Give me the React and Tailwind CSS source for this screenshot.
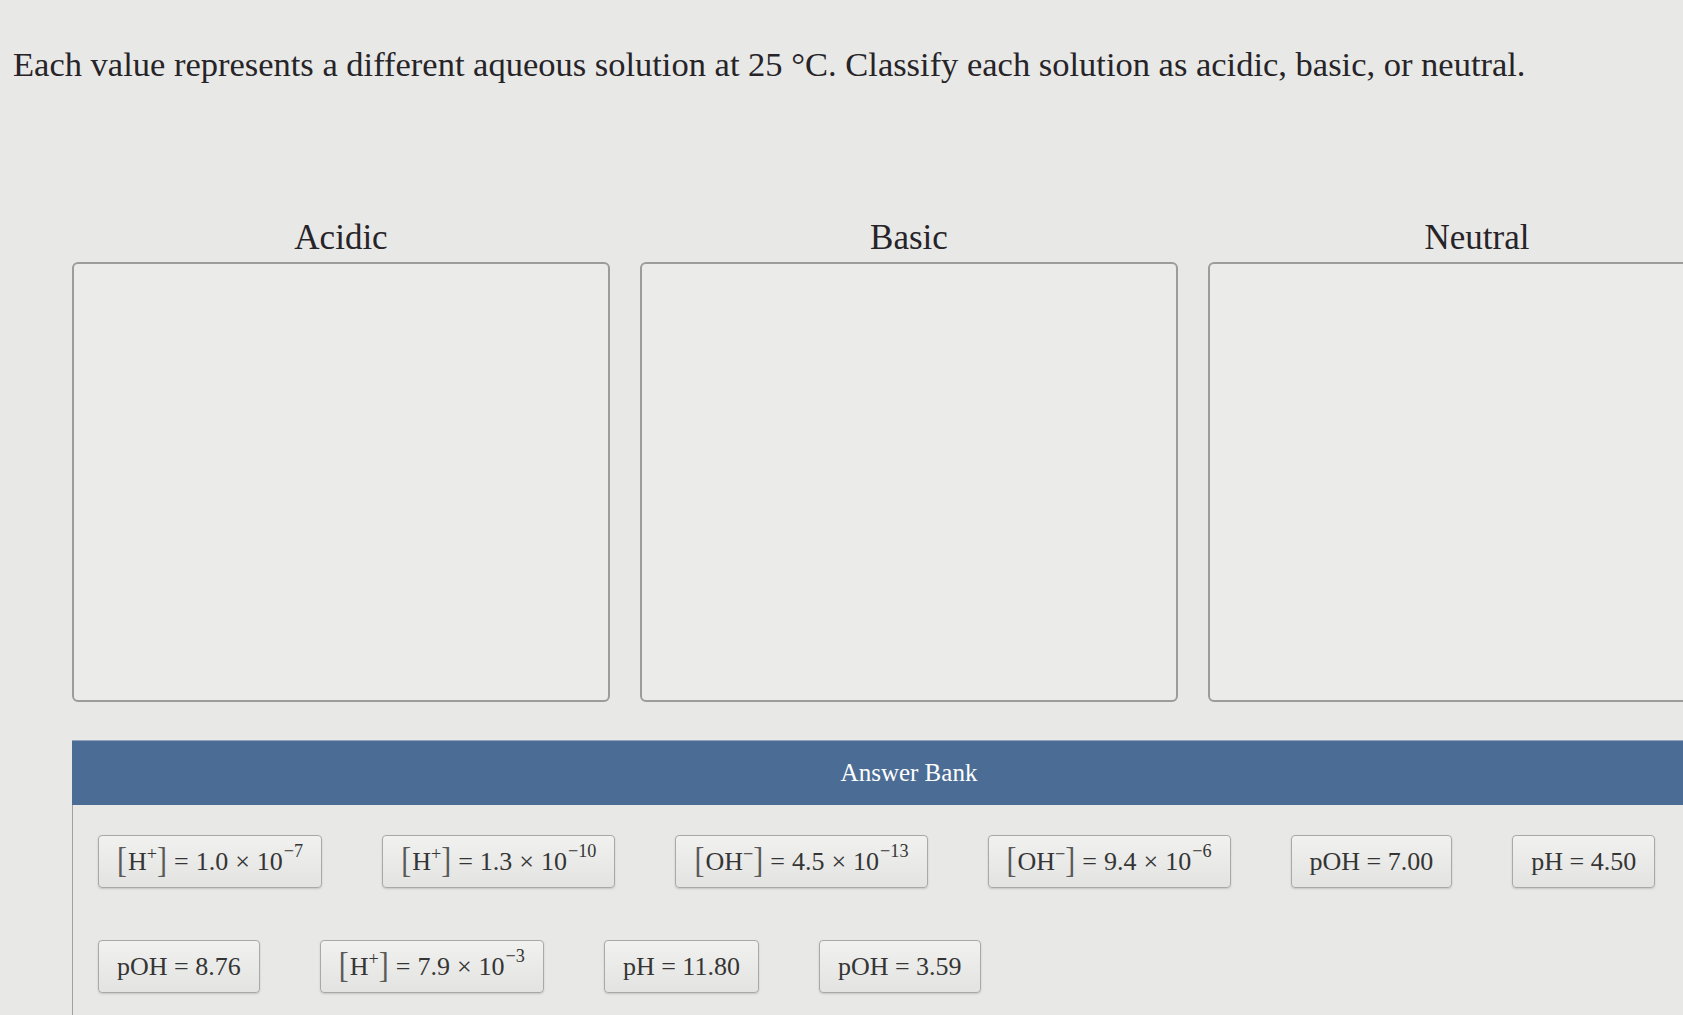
import React from 'react';

const Br = ({ children }) => (
  <span className="inline-block scale-y-[1.2] text-[1.15em] leading-none font-light text-[#5a5a5a]">{children}</span>
);

const Exp = ({ children }) => (
  <sup className="ml-[1px] text-[0.7em] -top-[0.7em]">{children}</sup>
);

const Conc = ({ ion, charge, value, exp }) => (
  <span>
    <Br>[</Br>
    <span className="ml-[1px]">{ion}</span>
    <sup className="text-[0.7em] -top-[0.55em]">{charge}</sup>
    <Br>]</Br>
    <span className="mx-[7px]">=</span>
    {value}
    <span className="mx-[7px]">×</span>10<Exp>{exp}</Exp>
  </span>
);

const bankRows = [
  [
    <Conc ion="H" charge="+" value="1.0" exp="−7" />,
    <Conc ion="H" charge="+" value="1.3" exp="−10" />,
    <Conc ion="OH" charge="−" value="4.5" exp="−13" />,
    <Conc ion="OH" charge="−" value="9.4" exp="−6" />,
    'pOH = 7.00',
    'pH = 4.50',
  ],
  [
    'pOH = 8.76',
    <Conc ion="H" charge="+" value="7.9" exp="−3" />,
    'pH = 11.80',
    'pOH = 3.59',
  ],
];

const bins = ['Acidic', 'Basic', 'Neutral'];

function Chip({ children }) {
  return (
    <div className="flex h-[53px] items-center whitespace-nowrap rounded-[4px] border border-[#a9a9a7] bg-gradient-to-b from-[#f1f1ef] to-[#e3e3e1] px-[18px] text-[26px] text-[#353535] shadow-[0_1px_2px_rgba(0,0,0,0.15)]">
      {children}
    </div>
  );
}

export default function App() {
  return (
    <div className="h-[1015px] w-full overflow-hidden bg-[#e8e8e6] font-['Liberation_Serif',serif] text-[#262428]">
      <p className="pl-[13px] pt-[44px] text-[34.5px] leading-[40px] whitespace-nowrap">
        Each value represents a different aqueous solution at 25 °C. Classify each solution as acidic, basic, or neutral.
      </p>

      <div className="ml-[72px] mt-[134px] w-[1674px]">
        <div className="grid grid-cols-3 gap-x-[30px]">
          {bins.map((name) => (
            <div key={name} className="flex flex-col items-center">
              <span className="pb-[4px] text-[35px] leading-[40px]">{name}</span>
              <div className="h-[440px] w-full rounded-md border-2 border-[#9c9c9a] bg-[#ebebe9]" />
            </div>
          ))}
        </div>

        <div className="mt-[38px]">
          <div className="flex h-[65px] items-center justify-center border-t border-[#8fa3bb] bg-[#4b6d95] text-[25px] text-white">
            Answer Bank
          </div>
          <div className="flex h-[300px] flex-col gap-[52px] border-l border-[#a0a0a0] px-[25px] pt-[30px]">
            {bankRows.map((row, i) => (
              <div key={i} className="flex gap-[60px]">
                {row.map((item, j) => (
                  <Chip key={j}>{item}</Chip>
                ))}
              </div>
            ))}
          </div>
        </div>
      </div>
    </div>
  );
}
